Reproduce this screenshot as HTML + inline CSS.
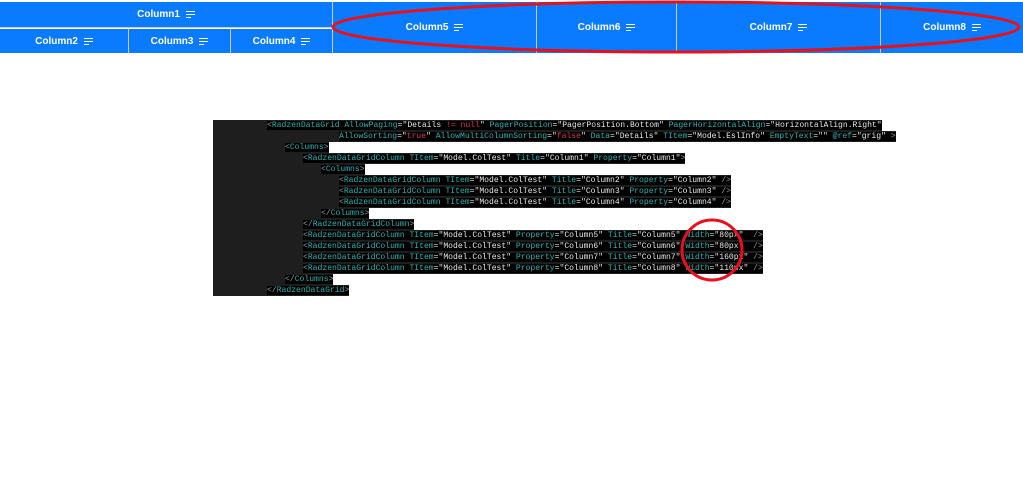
<!DOCTYPE html>
<html><head><meta charset="utf-8"><style>
body{margin:0;width:1023px;height:479px;background:#fff;position:relative;overflow:hidden;font-family:"Liberation Sans",sans-serif}
.h{position:absolute;background:#0a7bff;color:#fff;font-weight:bold;font-size:10px;display:flex;align-items:center;justify-content:center;box-sizing:border-box}
.h i{display:inline-block;width:9px;height:7px;margin-left:6px;position:relative}
.h i:before{content:"";position:absolute;left:0;top:0;width:9px;height:1px;background:#fff;box-shadow:0 3px 0 #fff}
.h i:after{content:"";position:absolute;left:0;top:6px;width:5px;height:1px;background:#fff}
.code{position:absolute;left:213px;top:120px;font-family:"Liberation Mono",monospace;font-size:8.07px;line-height:11px;color:#ddd}
.l{height:11px;background:#1e1e1e;white-space:pre;width:max-content}
.l span.t{background:#000}
.g{color:#999}.c{color:#2bb3b3}.r{color:#e0305a}.w{color:#e8e8e8}
</style></head><body>
<div class="h" style="left:0;top:2px;width:332px;height:26px;border-bottom:1px solid #ccc">Column1<i></i></div>
<div class="h" style="left:0;top:29px;width:128px;height:24px">Column2<i></i></div>
<div class="h" style="left:129px;top:29px;width:101px;height:24px">Column3<i></i></div>
<div class="h" style="left:231px;top:29px;width:101px;height:24px">Column4<i></i></div>
<div class="h" style="left:333px;top:2px;width:203px;height:51px">Column5<i></i></div>
<div class="h" style="left:537px;top:2px;width:139px;height:51px">Column6<i></i></div>
<div class="h" style="left:677px;top:2px;width:203px;height:51px">Column7<i></i></div>
<div class="h" style="left:881px;top:2px;width:142px;height:51px">Column8<i></i></div>
<div style="position:absolute;left:128px;top:29px;width:1px;height:24px;background:#ccc"></div>
<div style="position:absolute;left:230px;top:29px;width:1px;height:24px;background:#ccc"></div>
<div style="position:absolute;left:332px;top:2px;width:1px;height:51px;background:#ccc"></div>
<div style="position:absolute;left:536px;top:2px;width:1px;height:51px;background:#ccc"></div>
<div style="position:absolute;left:676px;top:2px;width:1px;height:51px;background:#ccc"></div>
<div style="position:absolute;left:880px;top:2px;width:1px;height:51px;background:#ccc"></div>

<div class="code">
<div class="l" style="padding-left:54px"><span class="t"><span class="g">&lt;</span><span class="c">RadzenDataGrid AllowPaging</span>="<span class="w">Details </span><span class="r">!= null</span>" <span class="c">PagerPosition</span>="<span class="w">PagerPosition.Bottom</span>" <span class="c">PagerHorizontalAlign</span>="<span class="w">HorizontalAlign.Right</span>"</span></div>
<div class="l" style="padding-left:126px"><span class="t"><span class="c">AllowSorting</span>="<span class="r">true</span>" <span class="c">AllowMultiColumnSorting</span>="<span class="r">false</span>" <span class="c">Data</span>="<span class="w">Details</span>" <span class="c">TItem</span>="<span class="w">Model.EslInfo</span>" <span class="c">EmptyText</span>="" <span class="c">@ref</span>="<span class="w">grig</span>" <span class="g">&gt;</span></span></div>
<div class="l" style="padding-left:72px"><span class="t"><span class="g">&lt;</span><span class="c">Columns</span><span class="g">&gt;</span></span></div>
<div class="l" style="padding-left:90px"><span class="t"><span class="g">&lt;</span><span class="c">RadzenDataGridColumn TItem</span>="<span class="w">Model.ColTest</span>" <span class="c">Title</span>="<span class="w">Column1</span>" <span class="c">Property</span>="<span class="w">Column1</span>"<span class="g">&gt;</span></span></div>
<div class="l" style="padding-left:108px"><span class="t"><span class="g">&lt;</span><span class="c">Columns</span><span class="g">&gt;</span></span></div>
<div class="l" style="padding-left:126px"><span class="t"><span class="g">&lt;</span><span class="c">RadzenDataGridColumn TItem</span>="<span class="w">Model.ColTest</span>" <span class="c">Title</span>="<span class="w">Column2</span>" <span class="c">Property</span>="<span class="w">Column2</span>" <span class="g">/&gt;</span></span></div>
<div class="l" style="padding-left:126px"><span class="t"><span class="g">&lt;</span><span class="c">RadzenDataGridColumn TItem</span>="<span class="w">Model.ColTest</span>" <span class="c">Title</span>="<span class="w">Column3</span>" <span class="c">Property</span>="<span class="w">Column3</span>" <span class="g">/&gt;</span></span></div>
<div class="l" style="padding-left:126px"><span class="t"><span class="g">&lt;</span><span class="c">RadzenDataGridColumn TItem</span>="<span class="w">Model.ColTest</span>" <span class="c">Title</span>="<span class="w">Column4</span>" <span class="c">Property</span>="<span class="w">Column4</span>" <span class="g">/&gt;</span></span></div>
<div class="l" style="padding-left:108px"><span class="t"><span class="g">&lt;/</span><span class="c">Columns</span><span class="g">&gt;</span></span></div>
<div class="l" style="padding-left:90px"><span class="t"><span class="g">&lt;/</span><span class="c">RadzenDataGridColumn</span><span class="g">&gt;</span></span></div>
<div class="l" style="padding-left:90px"><span class="t"><span class="g">&lt;</span><span class="c">RadzenDataGridColumn TItem</span>="<span class="w">Model.ColTest</span>" <span class="c">Property</span>="<span class="w">Column5</span>" <span class="c">Title</span>="<span class="w">Column5</span>" <span class="c">Width</span>="<span class="w">80px</span>"  <span class="g">/&gt;</span></span></div>
<div class="l" style="padding-left:90px"><span class="t"><span class="g">&lt;</span><span class="c">RadzenDataGridColumn TItem</span>="<span class="w">Model.ColTest</span>" <span class="c">Property</span>="<span class="w">Column6</span>" <span class="c">Title</span>="<span class="w">Column6</span>" <span class="c">Width</span>="<span class="w">80px</span>"  <span class="g">/&gt;</span></span></div>
<div class="l" style="padding-left:90px"><span class="t"><span class="g">&lt;</span><span class="c">RadzenDataGridColumn TItem</span>="<span class="w">Model.ColTest</span>" <span class="c">Property</span>="<span class="w">Column7</span>" <span class="c">Title</span>="<span class="w">Column7</span>" <span class="c">Width</span>="<span class="w">160px</span>" <span class="g">/&gt;</span></span></div>
<div class="l" style="padding-left:90px"><span class="t"><span class="g">&lt;</span><span class="c">RadzenDataGridColumn TItem</span>="<span class="w">Model.ColTest</span>" <span class="c">Property</span>="<span class="w">Column8</span>" <span class="c">Title</span>="<span class="w">Column8</span>" <span class="c">Width</span>="<span class="w">110px</span>" <span class="g">/&gt;</span></span></div>
<div class="l" style="padding-left:72px"><span class="t"><span class="g">&lt;/</span><span class="c">Columns</span><span class="g">&gt;</span></span></div>
<div class="l" style="padding-left:54px"><span class="t"><span class="g">&lt;/</span><span class="c">RadzenDataGrid</span><span class="g">&gt;</span></span></div>
</div>

<svg style="position:absolute;left:0;top:0" width="1023" height="479">
<ellipse cx="676" cy="27" rx="343" ry="25" fill="none" stroke="#e8101a" stroke-width="3"/>
<ellipse cx="712" cy="250" rx="30" ry="30" fill="none" stroke="#e8101a" stroke-width="3"/>
</svg>
</body></html>
